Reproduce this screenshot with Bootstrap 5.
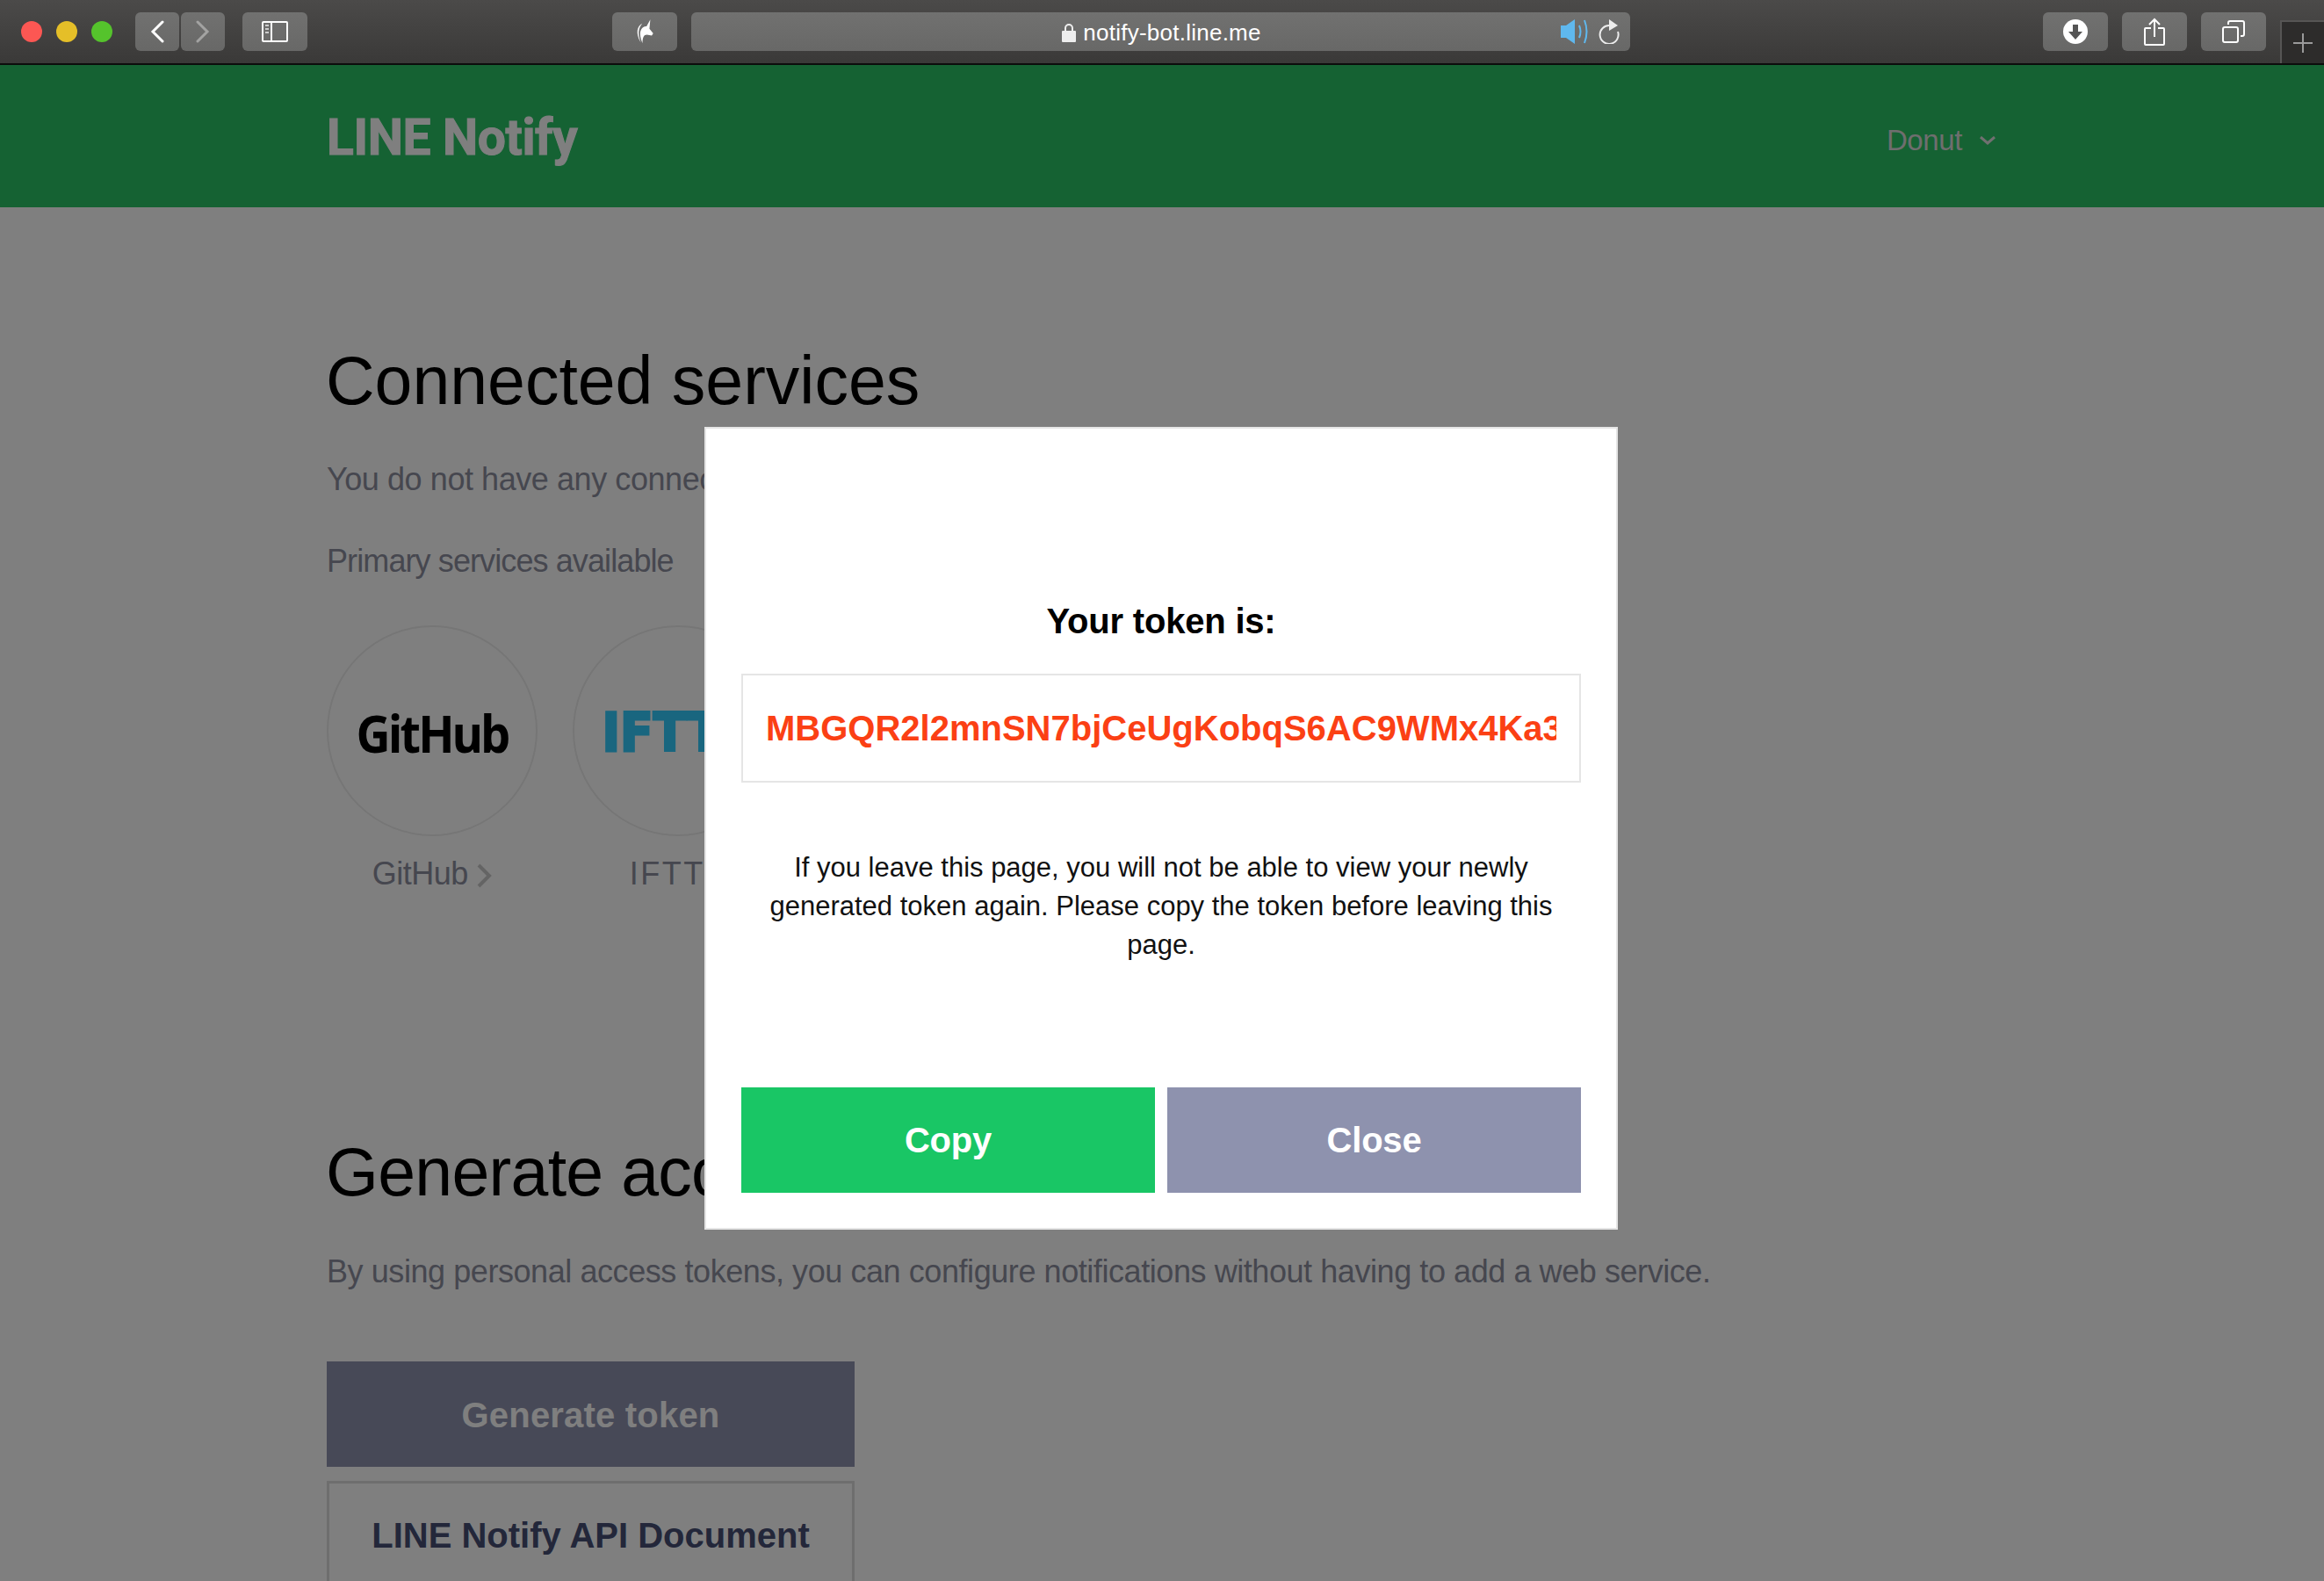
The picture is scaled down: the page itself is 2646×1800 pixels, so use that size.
<!DOCTYPE html>
<html lang="en">
<head>
    <meta charset="UTF-8">
    <title>LINE Notify</title>
    <link href="https://cdn.jsdelivr.net/npm/bootstrap@5.3.3/dist/css/bootstrap.min.css" rel="stylesheet">
    <style>
        html, body { height: 1800px; overflow: hidden; }
        body { font-family: "Liberation Sans", Arial, sans-serif; background: #fff; color: #8c8e9e; }

        /* browser chrome */
        .safari-bar { height: 74px; padding: 14px 0 0 24px; background: linear-gradient(#4b4a49, #3a3938); border-bottom: 2px solid #0c0c0c; }
        .light-dot { width: 24px; height: 24px; border-radius: 50%; margin-top: 10px; margin-right: 16px; }
        .bar-btn { height: 44px; border-radius: 6px; background: linear-gradient(#717170, #686867); }
        .btn-back { width: 50px; margin-left: 10px; }
        .btn-forward { width: 50px; margin-left: 2px; }
        .btn-sidebar { width: 74px; margin-left: 20px; }
        .btn-reader { width: 74px; margin-left: 347px; }
        .url-field { width: 1069px; margin-left: 16px; position: relative; color: #fff; font-size: 26px; letter-spacing: .25px; padding: 2px 0 0 2px; }
        .url-tail { position: absolute; right: 12px; top: 8px; gap: 11px; }
        .btn-action { width: 74px; }
        .btn-download { margin-left: 470px; }
        .btn-share, .btn-tabs { margin-left: 16px; }
        .new-tab { width: 50px; height: 49px; margin: 9px 0 0 16px; background: #2d2c2b; border: 2px solid #565554; border-width: 2px 0 0 2px; }

        /* page under the dialog */
        .page-wrap { position: relative; height: 1726px; overflow: hidden; }
        .green-head { height: 162px; background: #2ac466; padding: 0 372px; }
        .brand-text { font-family: Roboto, sans-serif; font-size: 57px; font-weight: 700; color: #fff; letter-spacing: -.4px; -webkit-text-stroke: 1px #fff; padding-top: 3px; }
        .user-menu { font-size: 33px; color: #dcdcdc; letter-spacing: -0.4px; padding-top: 10px; margin-right: 2px; gap: 20px; }
        .page-body { padding: 0 372px; }
        .big-title { font-size: 77px; font-weight: 400; color: #000; line-height: 1; margin: 0 0 0 -1px; }
        .first-title { margin-top: 159px; }
        .second-title { margin-top: 279px; letter-spacing: -.7px; }
        .body-line { font-size: 36px; line-height: 44px; margin: 0; letter-spacing: -0.43px; }
        .line-connected { margin-top: 52px; }
        .line-primary { margin-top: 49px; letter-spacing: -0.9px; }
        .line-tokens { margin-top: 53px; }
        .svc-row { margin-top: 51px; gap: 40px; }
        .svc-circle { width: 240px; height: 240px; border: 2px solid #ececec; border-radius: 50%; }
        .svc-item { width: 240px; }
        .svc-label { font-size: 36px; line-height: 44px; margin-top: 21px; letter-spacing: -0.5px; }
        .label-wide { letter-spacing: 2.5px; }
        .github-mark { font-family: "Noto Sans", sans-serif; font-weight: 700; font-size: 60px; color: #000; letter-spacing: -3px; transform: scaleX(.9); padding-top: 4px; }
        .ifttt-mark { font-family: "DejaVu Sans", sans-serif; font-weight: 700; font-size: 60px; color: #33ccff; transform: scaleX(.92); -webkit-text-stroke: 3px #33ccff; padding-top: 4px; }
        .wide-btn { width: 601px; height: 120px; border-radius: 0; font-size: 40px; font-weight: 700; }
        .btn-group-col { margin-top: 80px; }
        .btn-generate { background: #8e92ae; color: #fff; border: 0; padding-top: 8px; letter-spacing: .2px; }
        .btn-doc { background: #fff; color: #464e74; border: 3px solid #dcdcdc; margin-top: 16px; height: 124px; }

        /* dialog */
        .dim-layer { position: absolute; inset: 0; background: rgba(0, 0, 0, .5); }
        .token-dialog { position: absolute; left: 802px; top: 412px; width: 1040px; height: 914px; background: #fff; border: 2px solid #e5e5e5; padding: 0 40px; }
        .token-title { font-size: 40px; font-weight: 700; color: #000; line-height: 48px; letter-spacing: -.2px; margin: 0; padding-top: 195px; text-align: center; }
        .token-box { height: 124px; margin-top: 36px; border: 2px solid #e5e5e5; padding: 0 26px; }
        .token-value { font-size: 40px; font-weight: 700; color: #fb4014; white-space: nowrap; overflow: hidden; }
        .token-note { font-size: 31px; line-height: 44px; color: #111; text-align: center; margin: 75px 0 0; }
        .dialog-btns { position: absolute; left: 40px; right: 40px; bottom: 40px; }
        .dialog-btn { width: 471px; height: 120px; border: 0; border-radius: 0; font-size: 40px; font-weight: 700; color: #fff; letter-spacing: -.2px; }
        .dialog-copy { background: #19c665; }
        .dialog-close { background: #8e92ae; }
    </style>
</head>
<body>
    <div class="safari-bar d-flex align-items-start">
        <div class="light-dot" style="background:#fc5753"></div>
        <div class="light-dot" style="background:#e5bf28"></div>
        <div class="light-dot" style="background:#55c32c"></div>
        <div class="bar-btn btn-back d-flex align-items-center justify-content-center">
            <svg width="18" height="26" viewBox="0 0 18 26"><path d="M15 2 4 13l11 11" fill="none" stroke="#fff" stroke-width="3" stroke-linecap="round"/></svg>
        </div>
        <div class="bar-btn btn-forward d-flex align-items-center justify-content-center">
            <svg width="18" height="26" viewBox="0 0 18 26"><path d="M3 2l11 11L3 24" fill="none" stroke="#a3a3a2" stroke-width="3" stroke-linecap="round"/></svg>
        </div>
        <div class="bar-btn btn-sidebar d-flex align-items-center justify-content-center">
            <svg width="30" height="24" viewBox="0 0 30 24"><rect x="1" y="1" width="28" height="22" rx="1" fill="none" stroke="#fff" stroke-width="2"/><path d="M11 1v22" stroke="#fff" stroke-width="2"/><path d="M4 5h4M4 9h4M4 13h4" stroke="#ccc" stroke-width="2"/></svg>
        </div>
        <div class="bar-btn btn-reader d-flex align-items-center justify-content-center">
            <svg width="23" height="30" viewBox="100 35 70 90"><path d="M153 38 140 62c-12-2-22 10-22 26 0 12 4 22 8 32 0-15 2-22 8-28 8-4 16 0 24 2l5-8-13-16z" fill="#fff"/><path d="M125 52c-17 8-25 33-5 66-10-28-10-48 5-66z" fill="#fff"/></svg>
        </div>
        <div class="bar-btn url-field d-flex align-items-center justify-content-center">
            <svg class="me-2" width="16" height="22" viewBox="0 0 16 22"><path d="M4 10V6a4 4 0 0 1 8 0v4" fill="none" stroke="#eee" stroke-width="2"/><rect y="9" width="16" height="13" rx="1" fill="#eee"/></svg>
            <span>notify-bot.line.me</span>
            <span class="url-tail d-flex">
                <svg width="32" height="28" viewBox="0 0 32 28"><path d="M0 7h6l10-7v28L6 21H0z" fill="#5fb8ee"/><path d="M21 7q3 7 0 14M27 1q5 13 0 26" fill="none" stroke="#5fb8ee" stroke-width="2"/></svg>
                <svg width="24" height="28" viewBox="0 0 24 28"><path d="M13 7A10.500 10.500 0 1 0 22 14" fill="none" stroke="#ececec" stroke-width="2"/><path d="M12 0l10 7-10 6z" fill="#ececec"/></svg>
            </span>
        </div>
        <div class="bar-btn btn-action btn-download d-flex align-items-center justify-content-center">
            <svg width="28" height="28" viewBox="0 0 28 28"><circle cx="14" cy="14" r="14" fill="#fff"/><path d="M11 6h6v8h5l-8 9-8-9h5z" fill="#555"/></svg>
        </div>
        <div class="bar-btn btn-action btn-share d-flex align-items-center justify-content-center">
            <svg width="24" height="32" viewBox="0 0 24 32"><path d="M8 12H2a1 1 0 0 0-1 1v17a1 1 0 0 0 1 1h20a1 1 0 0 0 1-1V13a1 1 0 0 0-1-1h-6" fill="none" stroke="#fff" stroke-width="2"/><path d="M12 22V2M6 8l6-6 6 6" fill="none" stroke="#fff" stroke-width="2"/></svg>
        </div>
        <div class="bar-btn btn-action btn-tabs d-flex align-items-center justify-content-center">
            <svg width="26" height="26" viewBox="0 0 26 26"><rect x="1" y="8" width="17" height="17" rx="2" fill="none" stroke="#fff" stroke-width="2"/><path d="M7 5V3a2 2 0 0 1 2-2h14a2 2 0 0 1 2 2v13a2 2 0 0 1-2 2h-2" fill="none" stroke="#fff" stroke-width="2"/></svg>
        </div>
        <div class="new-tab d-flex align-items-center justify-content-center">
            <svg width="24" height="24" viewBox="0 0 24 24"><path d="M12 1v22M1 12h22" stroke="#9a9a9a" stroke-width="2"/></svg>
        </div>
    </div>

    <div class="page-wrap">
        <header class="green-head d-flex align-items-center justify-content-between">
            <span class="brand-text">LINE Notify</span>
            <span class="user-menu d-flex align-items-center">Donut
                <svg width="18" height="10" viewBox="0 0 18 10"><path d="M1 1l8 7 8-7" fill="none" stroke="#e0e0e0" stroke-width="3"/></svg>
            </span>
        </header>

        <main class="page-body">
            <h1 class="big-title first-title">Connected services</h1>
            <p class="body-line line-connected">You do not have any connected services.</p>
            <p class="body-line line-primary">Primary services available</p>
            <div class="d-flex svc-row">
                <div class="svc-item text-center">
                    <div class="svc-circle d-flex align-items-center justify-content-center"><span class="github-mark">GitHub</span></div>
                    <div class="svc-label">GitHub <svg width="18" height="30" viewBox="0 0 18 30"><path d="M3 3l12 12L3 27" fill="none" stroke="#c8c8c8" stroke-width="4"/></svg></div>
                </div>
                <div class="svc-item text-center">
                    <div class="svc-circle d-flex align-items-center justify-content-center"><span class="ifttt-mark">IFTTT</span></div>
                    <div class="svc-label label-wide">IFTTT</div>
                </div>
            </div>
            <h1 class="big-title second-title">Generate access token (For developers)</h1>
            <p class="body-line line-tokens">By using personal access tokens, you can configure notifications without having to add a web service.</p>
            <div class="d-flex flex-column btn-group-col">
                <button class="btn wide-btn btn-generate">Generate token</button>
                <button class="btn wide-btn btn-doc">LINE Notify API Document</button>
            </div>
        </main>

        <div class="dim-layer"></div>

        <div class="token-dialog">
            <h2 class="token-title">Your token is:</h2>
            <div class="token-box d-flex align-items-center">
                <div class="token-value">MBGQR2l2mnSN7bjCeUgKobqS6AC9WMx4Ka3pXvTqLd8</div>
            </div>
            <p class="token-note">If you leave this page, you will not be able to view your newly generated token again. Please copy the token before leaving this page.</p>
            <div class="dialog-btns d-flex justify-content-between">
                <button class="btn dialog-btn dialog-copy">Copy</button>
                <button class="btn dialog-btn dialog-close">Close</button>
            </div>
        </div>
    </div>
</body>
</html>
